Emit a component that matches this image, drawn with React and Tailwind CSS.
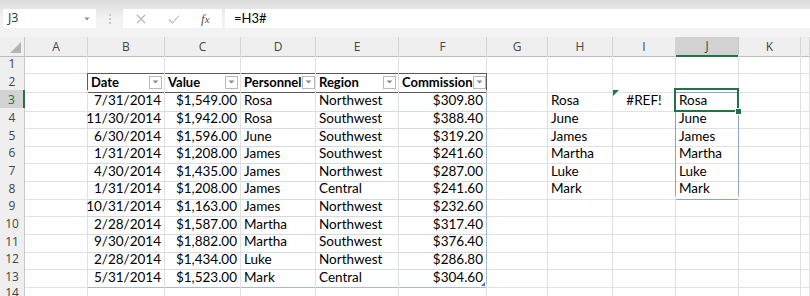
import React from "react";

const GRID =
  "grid grid-cols-[25px_63px_77px_76px_75px_83px_88px_61px_65px_63px_63px_62px_1fr]";

const data = [
  ["7/31/2014", "$1,549.00", "Rosa", "Northwest", "$309.80"],
  ["11/30/2014", "$1,942.00", "Rosa", "Southwest", "$388.40"],
  ["6/30/2014", "$1,596.00", "June", "Southwest", "$319.20"],
  ["1/31/2014", "$1,208.00", "James", "Southwest", "$241.60"],
  ["4/30/2014", "$1,435.00", "James", "Northwest", "$287.00"],
  ["1/31/2014", "$1,208.00", "James", "Central", "$241.60"],
  ["10/31/2014", "$1,163.00", "James", "Northwest", "$232.60"],
  ["2/28/2014", "$1,587.00", "Martha", "Northwest", "$317.40"],
  ["9/30/2014", "$1,882.00", "Martha", "Southwest", "$376.40"],
  ["2/28/2014", "$1,434.00", "Luke", "Northwest", "$286.80"],
  ["5/31/2014", "$1,523.00", "Mark", "Central", "$304.60"],
];

const names = ["Rosa", "June", "James", "Martha", "Luke", "Mark"];
const headers = ["Date", "Value", "Personnel", "Region", "Commission"];
const colLetters = ["A", "B", "C", "D", "E", "F", "G", "H", "I", "J", "K", ""];

function FilterBtn() {
  return (
    <span className="ml-auto mr-[2px] flex h-[13px] w-[13px] shrink-0 items-center justify-center border border-[#b9b9b9] bg-white">
      <svg width="7" height="4" viewBox="0 0 7 4">
        <path d="M0.5 0.5 L6.5 0.5 L3.5 3.5 Z" fill="#8a8a8a" />
      </svg>
    </span>
  );
}

function Cell({ r, c }) {
  let border = "border-r border-b border-r-[#e1e1e1] border-b-[#e1e1e1]";
  let content = null;
  let align = "justify-start pl-[3px]";
  let overlay = null;

  const inTable = c >= 2 && c <= 6;

  if (r === 1 && inTable) {
    border = "border-r border-b border-r-[#e1e1e1] border-b-[#5b5b5b]";
  }
  if (r === 2 && c === 1) {
    border = "border-r border-b border-r-[#5b5b5b] border-b-[#e1e1e1]";
  }
  if (r === 2 && inTable) {
    border =
      c === 6
        ? "border-r border-b border-r-[#5b5b5b] border-b-[#5b5b5b]"
        : "border-r border-b border-r-[#e1e1e1] border-b-[#5b5b5b]";
    content = (
      <>
        <span className="text-[13px] font-bold text-black">{headers[c - 2]}</span>
        <FilterBtn />
      </>
    );
  }
  if (r >= 3 && r <= 13 && inTable) {
    const row = data[r - 3];
    const v = row[c - 2];
    const right = c === 2 || c === 3 || c === 6;
    align = right ? "justify-end pr-[3px]" : "justify-start pl-[3px]";
    content = v;
    const rColor = c === 6 ? "border-r-[#a9b8d3]" : "border-r-[#e1e1e1]";
    const bColor = r === 13 ? "border-b-[#a9b8d3]" : "border-b-[#d3dae6]";
    border = `border-r border-b ${rColor} ${bColor}`;
    if (r === 13 && c === 6) {
      overlay = (
        <span className="absolute bottom-[1px] right-[1px] h-0 w-0 border-b-[4px] border-l-[4px] border-b-[#4a6fb5] border-l-transparent" />
      );
    }
  }
  if (c === 8 && r >= 3 && r <= 8) {
    content = names[r - 3];
  }
  if (c === 9 && r >= 3 && r <= 8) {
    border = "border-r border-b border-r-[#8ca4cc] border-b-[#e1e1e1]";
  }
  if (c === 9 && r === 3) {
    content = "#REF!";
    align = "justify-center";
    overlay = (
      <span className="absolute left-0 top-0 h-0 w-0 border-t-[6px] border-r-[6px] border-t-[#1f7a45] border-r-transparent" />
    );
  }
  if (c === 10 && r === 2) {
    border = "border-r border-b border-r-[#e1e1e1] border-b-[#8ca4cc]";
  }
  if (c === 10 && r >= 3 && r <= 8) {
    content = names[r - 3];
    border =
      r === 8
        ? "border-r border-b border-r-[#8ca4cc] border-b-[#8ca4cc]"
        : "border-r border-b border-r-[#8ca4cc] border-b-[#e1e1e1]";
    if (r === 3) {
      overlay = (
        <>
          <span className="pointer-events-none absolute -left-[2px] -top-[2px] z-10 h-[calc(100%+3px)] w-[calc(100%+3px)] border-2 border-[#217346]" />
          <span className="absolute -bottom-[4px] -right-[4px] z-20 h-[7px] w-[7px] border border-white bg-[#217346]" />
        </>
      );
    }
  }

  return (
    <div
      className={`relative flex h-full items-center overflow-visible whitespace-nowrap ${border} ${align}`}
    >
      {content}
      {overlay}
    </div>
  );
}

function Row({ r }) {
  const selected = r === 3;
  return (
    <div className={`${GRID} h-[17.65px]`}>
      <div
        className={`flex items-center justify-center border-b ${
          selected
            ? "border-r-2 border-r-[#217346] border-b-[#c8c8c8] bg-[#d2d2d2] text-[#217346]"
            : "border-r border-r-[#c8c8c8] border-b-[#dadada] bg-[#efefef] text-[#444]"
        } font-['Open_Sans',sans-serif] text-[12px]`}
      >
        {r}
      </div>
      {colLetters.map((_, i) => (
        <Cell key={i} r={r} c={i + 1} />
      ))}
    </div>
  );
}

export default function App() {
  const rows = Array.from({ length: 14 }, (_, i) => i + 1);
  return (
    <div className="h-[296px] w-[810px] overflow-hidden bg-white font-['Lato','Carlito',sans-serif] text-[13.5px] text-black">
      {/* Formula bar */}
      <div className="flex h-[37px] items-start bg-gradient-to-b from-[#dcdcdc] via-[#f2f2f2] to-[#f3f3f3] pt-[9px]">
        <div className="ml-[3px] flex h-[19px] w-[93px] items-center bg-white pl-[5px] pr-[6px] font-['Open_Sans',sans-serif] text-[12.5px] text-[#333]">
          J3
          <svg className="ml-auto" width="6" height="4" viewBox="0 0 6 4">
            <path d="M0.5 0.5 L5.5 0.5 L3 3.5 Z" fill="#8a8a8a" />
          </svg>
        </div>
        <div className="flex h-[19px] w-[27px] flex-col items-center justify-center gap-[2px]">
          <span className="h-[2px] w-[2px] rounded-full bg-[#bdbdbd]" />
          <span className="h-[2px] w-[2px] rounded-full bg-[#bdbdbd]" />
          <span className="h-[2px] w-[2px] rounded-full bg-[#bdbdbd]" />
        </div>
        <div className="flex h-[19px] w-[99px] items-center bg-white">
          <svg className="ml-[13px]" width="10" height="10" viewBox="0 0 10 10">
            <path d="M1 1 L9 9 M9 1 L1 9" stroke="#b5b5b5" strokeWidth="1.1" />
          </svg>
          <svg className="ml-[22px]" width="12" height="10" viewBox="0 0 12 10">
            <path d="M1 5.5 L4.5 9 L11 1.5" stroke="#b5b5b5" strokeWidth="1.1" fill="none" />
          </svg>
          <span className="ml-[21px] font-['Liberation_Serif',serif] text-[13px] italic text-[#555]">
            f<span className="text-[11px]">x</span>
          </span>
        </div>
        <div className="ml-[3px] flex h-[19px] flex-1 items-center bg-white pl-[9px] font-['Lato',sans-serif] text-[13px] text-black">
          =H3#
        </div>
      </div>

      {/* Column headers */}
      <div className={`${GRID} h-[18px] font-['Open_Sans',sans-serif] text-[12px] text-[#444]`}>
        <div className="relative border-r border-b border-r-[#c8c8c8] border-b-[#bdbdbd] bg-[#efefef]">
          <span className="absolute bottom-[3px] right-[3px] h-0 w-0 border-b-[11px] border-l-[11px] border-b-[#b4b4b4] border-l-transparent" />
        </div>
        {colLetters.map((l, i) =>
          l === "J" ? (
            <div
              key={i}
              className="flex items-center justify-center border-r border-b-2 border-r-[#c8c8c8] border-b-[#217346] bg-[#d2d2d2] text-[#444]"
            >
              {l}
            </div>
          ) : (
            <div
              key={i}
              className="flex items-center justify-center border-r border-b border-r-[#d4d4d4] border-b-[#bdbdbd] bg-[#efefef]"
            >
              {l}
            </div>
          )
        )}
      </div>

      {rows.map((r) => (
        <Row key={r} r={r} />
      ))}
    </div>
  );
}
